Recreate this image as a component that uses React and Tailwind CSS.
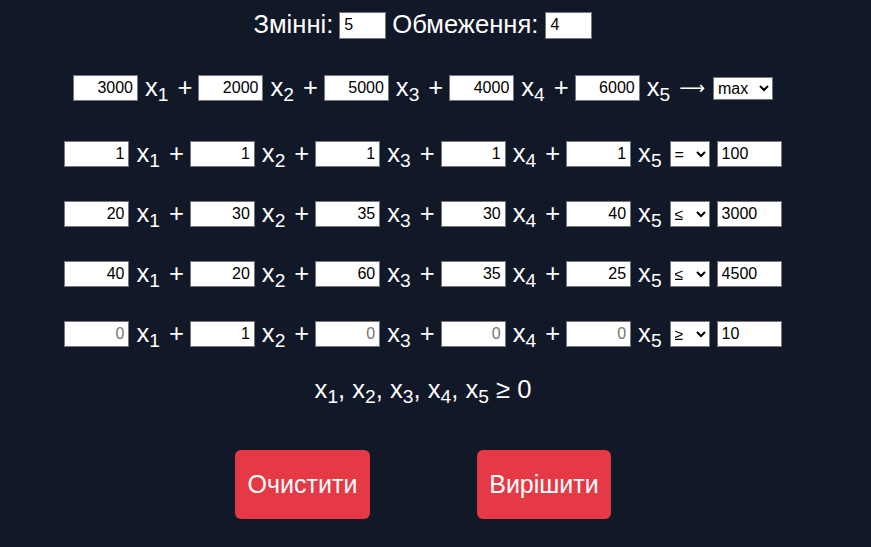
import React from "react";

const obj = ["3000", "2000", "5000", "4000", "6000"];
const rows = [
  { c: ["1", "1", "1", "1", "1"], op: "=", rhs: "100" },
  { c: ["20", "30", "35", "30", "40"], op: "≤", rhs: "3000" },
  { c: ["40", "20", "60", "35", "25"], op: "≤", rhs: "4500" },
  { c: ["", "1", "", "", ""], op: "≥", rhs: "10" },
];

function Coef({ v }) {
  return (
    <input
      type="text"
      defaultValue={v}
      placeholder="0"
      className="w-[65px] h-[26px] bg-white text-black text-[16px] text-right pr-[4px] border border-[#767676] placeholder:text-[#757575] outline-none"
    />
  );
}

function Terms({ vals }) {
  return vals.map((v, i) => (
    <React.Fragment key={i}>
      {i > 0 && <span className="ml-[9px] mr-[6px]">+</span>}
      <Coef v={v} />
      <span className="ml-[7px]">
        x<sub>{i + 1}</sub>
      </span>
    </React.Fragment>
  ));
}

export default function App() {
  return (
    <div
      className="min-h-screen w-full bg-[#111827] text-white pr-[25px]"
      style={{ fontFamily: '"Liberation Sans", Arial, sans-serif' }}
    >
      <div className="flex flex-col items-center text-[25.6px] leading-none">
        <div className="h-[50px] flex items-center">
          <span>Змінні:</span>
          <input
            type="text"
            defaultValue="5"
            className="ml-[6px] w-[47px] h-[27px] bg-white text-black text-[16px] pl-[4px] border border-[#767676] outline-none"
          />
          <span className="ml-[6px]">Обмеження:</span>
          <input
            type="text"
            defaultValue="4"
            className="ml-[7px] w-[47px] h-[27px] bg-white text-black text-[16px] pl-[4px] border border-[#767676] outline-none"
          />
        </div>

        <div className="mt-[25px] h-[26px] flex items-center">
          <Terms vals={obj} />
          <span
            className="ml-[9px]"
            style={{ fontFamily: '"DejaVu Sans", sans-serif', fontSize: "18px" }}
          >
            ⟶
          </span>
          <select
            defaultValue="max"
            className="ml-[8px] w-[60px] h-[23px] bg-white text-black text-[16px] border border-[#767676] outline-none"
            style={{ fontFamily: '"Liberation Sans", Arial, sans-serif' }}
          >
            <option value="max">max</option>
            <option value="min">min</option>
          </select>
        </div>

        <div className="mt-[40px] flex flex-col gap-[34px]">
          {rows.map((r, ri) => (
            <div key={ri} className="h-[26px] flex items-center">
              <Terms vals={r.c} />
              <select
                defaultValue={r.op}
                className="ml-[8px] w-[40px] h-[26px] bg-white text-black text-[16px] border border-[#767676] outline-none"
              >
                <option value="=">=</option>
                <option value="≤">≤</option>
                <option value="≥">≥</option>
              </select>
              <input
                type="text"
                defaultValue={r.rhs}
                className="ml-[7px] w-[65px] h-[26px] bg-white text-black text-[16px] pl-[4px] border border-[#767676] outline-none"
              />
            </div>
          ))}
        </div>

        <div className="mt-[28px] h-[30px] flex items-center">
          <span>
            x<sub>1</sub>, x<sub>2</sub>, x<sub>3</sub>, x<sub>4</sub>, x<sub>5</sub> ≥ 0
          </span>
        </div>

        <div className="mt-[45px] flex gap-[107px]">
          <button className="w-[135px] h-[69px] rounded-[6px] bg-[#e63946] text-white text-[25px]">
            Очистити
          </button>
          <button className="w-[134px] h-[69px] rounded-[6px] bg-[#e63946] text-white text-[25px]">
            Вирішити
          </button>
        </div>
      </div>
    </div>
  );
}
